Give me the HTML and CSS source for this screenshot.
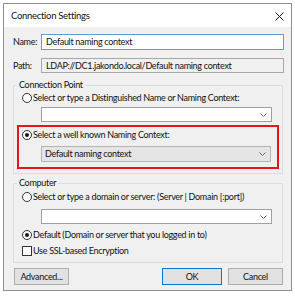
FILE: index.html
```html
<!DOCTYPE html>
<html>
<head>
<meta charset="utf-8">
<link rel="stylesheet" href="styles.css">
</head>
<body>
<div class="window">
  <div class="titlebar">
    <span class="title">Connection Settings</span>
    <svg class="close" width="9" height="9" viewBox="0 0 9 9"><path d="M0.5 0.5L8.5 8.5M8.5 0.5L0.5 8.5" stroke="#111" stroke-width="1"/></svg>
  </div>
  <div class="content">
    <div class="field name-row">
      <span class="flabel">Name:</span>
      <div class="input focus">Default naming context</div>
    </div>
    <div class="field path-row">
      <span class="flabel">Path:</span>
      <div class="input readonly">LDAP://DC1.jakondo.local/Default naming context</div>
    </div>
    <div class="group g1">
      <span class="legend">Connection Point</span>
      <div class="opt r1"><span class="radio"></span><span>Select or type a Distinguished Name or Naming Context:</span></div>
      <div class="combo c1"><span></span><svg class="chev" width="7" height="4" viewBox="0 0 7 4"><path d="M0.5 0.5L3.5 3.5L6.5 0.5" fill="none" stroke="#666" stroke-width="1"/></svg></div>
      <div class="highlight">
        <div class="opt r2"><span class="radio on"></span><span>Select a well known Naming Context:</span></div>
        <div class="combo list c2"><span>Default naming context</span><svg class="chev" width="7" height="4" viewBox="0 0 7 4"><path d="M0.5 0.5L3.5 3.5L6.5 0.5" fill="none" stroke="#666" stroke-width="1"/></svg></div>
      </div>
    </div>
    <div class="group g2">
      <span class="legend">Computer</span>
      <div class="opt r3"><span class="radio"></span><span>Select or type a domain or server: (Server | Domain [:port])</span></div>
      <div class="combo c3"><span></span><svg class="chev" width="7" height="4" viewBox="0 0 7 4"><path d="M0.5 0.5L3.5 3.5L6.5 0.5" fill="none" stroke="#666" stroke-width="1"/></svg></div>
      <div class="opt r4"><span class="radio on"></span><span>Default (Domain or server that you logged in to)</span></div>
      <div class="opt r5"><span class="check"></span><span>Use SSL-based Encryption</span></div>
    </div>
    <div class="buttons">
      <div class="btn adv">Advanced...</div>
      <div class="spacer"></div>
      <div class="btn ok">OK</div>
      <div class="btn cancel">Cancel</div>
    </div>
  </div>
</div>
</body>
</html>
```
FILE: styles.css
```css
* { box-sizing: border-box; }
html, body { margin: 0; padding: 0; background: #ffffff; }
body {
  font-family: Lato, "Noto Sans", sans-serif;
  font-size: 9px;
  letter-spacing: -0.3px;
  color: #111;
  width: 295px;
  height: 300px;
  overflow: hidden;
}
.window {
  margin: 3px 0 0 3px;
  width: 289px;
  height: 288px;
  border: 1px solid #8f8f8f;
  background: #f0f0f0;
  display: flex;
  flex-direction: column;
}
.titlebar {
  height: 23px;
  background: #ffffff;
  display: flex;
  align-items: center;
  justify-content: space-between;
  padding: 0 7px 0 7px;
}
.title { font-size: 9.5px; letter-spacing: -0.3px; line-height: 12px; margin-top: 1px; }
.close { display: block; margin-top: 1px; }
.content {
  padding: 0 7px 0 9px;
  display: flex;
  flex-direction: column;
}
.field { display: flex; align-items: center; }
.flabel { width: 28px; line-height: 12px; }
.name-row { margin-top: 7px; height: 16px; }
.path-row { margin-top: 8px; height: 15px; }
.input {
  flex: 1;
  height: 100%;
  border: 1px solid #7a7a7a;
  background: #fff;
  padding: 0 0 0 4px;
  display: flex;
  align-items: center;
  line-height: 12px;
  white-space: nowrap;
}
.input.focus { border-color: #5a9ee0; }
.input.readonly { background: #f0f0f0; border-color: #a8a8a8; }
.group {
  border: 1px solid #dcdcdc;
  margin-left: 0;
  margin-right: 1px;
  display: flex;
  flex-direction: column;
}
.g1 { margin-top: 12px; padding: 0 1px 4px 0; }
.g2 { margin-top: 9px; padding: 0 1px 5px 0; }
.legend {
  align-self: flex-start;
  margin: -7px 0 0 3px;
  padding: 0 2px;
  background: #f0f0f0;
  line-height: 12px;
  height: 12px;
}
.opt {
  display: flex;
  align-items: center;
  height: 12px;
  line-height: 12px;
  padding-left: 8px;
  white-space: nowrap;
}
.opt > span:last-child { margin-left: 1px; }
.radio {
  width: 10px;
  height: 10px;
  border: 1px solid #333;
  border-radius: 50%;
  background: #fff;
  display: flex;
  align-items: center;
  justify-content: center;
  flex: none;
}
.radio.on::after {
  content: "";
  width: 4px;
  height: 4px;
  border-radius: 50%;
  background: #1a1a1a;
}
.check {
  width: 10px;
  height: 10px;
  border: 1px solid #333;
  background: #fff;
  flex: none;
}
.r1 { margin-top: 1px; }
.combo {
  height: 16px;
  border: 1px solid #a0a0a0;
  background: #fff;
  display: flex;
  align-items: center;
  justify-content: space-between;
  padding: 0 4px 0 3px;
  line-height: 12px;
}
.combo .chev { display: block; }
.combo.list { background: #e5e5e5; border-color: #b4b4b4; }
.c1 { margin: 3px 9px 0 27px; height: 15px; }
.highlight {
  margin: 3px 2px 0 3px;
  border: 2px solid #e8141c;
  padding: 2px 0 5px 0;
  display: flex;
  flex-direction: column;
}
.highlight .opt { padding-left: 3px; }
.c2 { margin: 5px 6px 0 22px; }
.r3 { margin-top: 2px; }
.c3 { margin: 6px 9px 0 27px; height: 15px; }
.r4 { margin-top: 5px; }
.r5 { margin-top: 4px; }
.buttons {
  display: flex;
  margin-top: 5px;
  height: 17px;
}
.spacer { flex: 1; }
.btn {
  height: 17px;
  border: 1px solid #adadad;
  background: #e1e1e1;
  display: flex;
  align-items: center;
  justify-content: center;
  line-height: 12px;
}
.adv { width: 55px; margin-left: 1px; }
.ok { width: 60px; border-color: #0078d7; }
.cancel { width: 55px; margin-left: 6px; margin-right: 1px; }
```
